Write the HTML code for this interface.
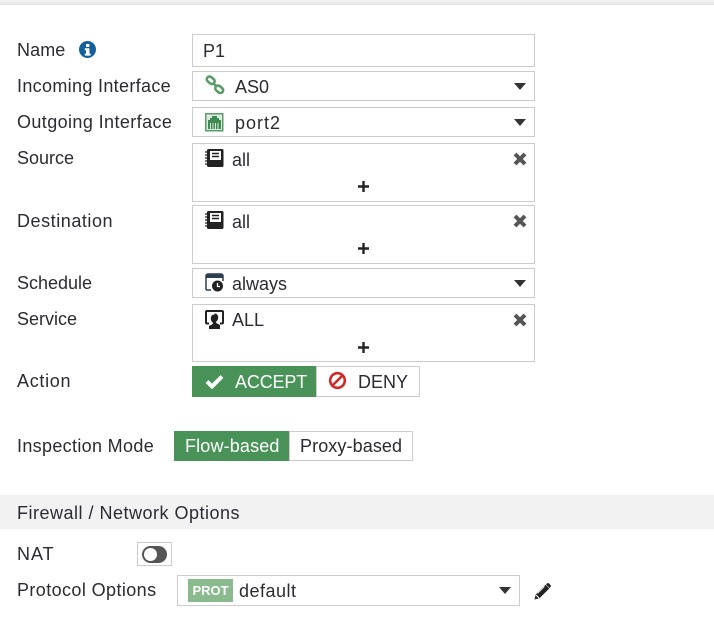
<!DOCTYPE html>
<html><head><meta charset="utf-8">
<style>
html,body{margin:0;padding:0;background:#fff;}
body{width:714px;height:631px;position:relative;overflow:hidden;font-family:"Liberation Sans",sans-serif;color:#2b2b33;font-size:18px;}
.t{position:absolute;white-space:nowrap;line-height:22px;letter-spacing:0;}
.b{position:absolute;box-sizing:border-box;border:1px solid #ccc;background:#fff;left:192px;width:343px;}
.arr{position:absolute;width:0;height:0;border-left:6.5px solid transparent;border-right:6.5px solid transparent;border-top:7px solid #333;}
svg{position:absolute;}
</style></head><body>
<div style="position:absolute;left:0;top:0;width:714px;height:5px;background:linear-gradient(#f4f4f4,#e2e2e2);"></div>

<div class="t" style="left:17px;top:39px;letter-spacing:.1px;">Name</div>
<svg style="left:79px;top:41px" width="18" height="18" viewBox="0 0 18 18"><circle cx="8.500" cy="8.500" r="8.500" fill="#14609c"/><rect x="7" y="3" width="3.400" height="3" fill="#fff"/><path d="M5.800 7.200h4.600v5.400h1.200v2H5.800v-2H7V9.200H5.800z" fill="#fff"/></svg>
<div class="b" style="top:34px;height:33px;"></div>
<div class="t" style="left:203px;top:40px;">P1</div>

<div class="t" style="left:17px;top:75px;letter-spacing:.33px;">Incoming Interface</div>
<div class="b" style="top:71px;height:30px;"></div>
<svg style="left:205px;top:75px" width="20" height="20" viewBox="0 0 20 20" fill="none" stroke="#5a9c68" stroke-width="2.600"><rect x="1.500" y="2.500" width="8.500" height="5.500" rx="2.700" transform="rotate(40 5.700 5.200)"/><rect x="10" y="11.500" width="8.500" height="5.500" rx="2.700" transform="rotate(40 14.200 14.200)"/><path d="M8 8l4 4"/></svg>
<div class="t" style="left:235px;top:76px;">AS0</div>
<div class="arr" style="left:514px;top:83px;"></div>

<div class="t" style="left:17px;top:111px;letter-spacing:.4px;">Outgoing Interface</div>
<div class="b" style="top:107px;height:30px;"></div>
<svg style="left:205px;top:113px" width="19" height="19" viewBox="0 0 19 19"><rect x=".75" y=".75" width="17" height="17" fill="#dcebe0" stroke="#5a9c68" stroke-width="1.500"/><path d="M3 16V7h2V5h2V3h5v2h2v2h2v9z" fill="#3f8a50"/><path d="M5.500 10v6M8 10v6M10.500 10v6M13 10v6" stroke="#dcebe0" stroke-width="1"/></svg>
<div class="t" style="left:235px;top:112px;letter-spacing:1px;">port2</div>
<div class="arr" style="left:514px;top:119px;"></div>

<div class="t" style="left:17px;top:147px;">Source</div>
<div class="b" style="top:143px;height:59px;"></div>
<svg style="left:205px;top:149px" width="19" height="18" viewBox="0 0 19 18"><rect x="2" y="0" width="16.500" height="18" rx="1.500" fill="#222"/><rect x="5" y="2" width="11" height="9" fill="#fff"/><path d="M7 4.500h7M7 7.500h7" stroke="#222" stroke-width="1.500"/><path d="M0 3h3M0 6h3M0 9h3M0 12h3M0 15h3" stroke="#222" stroke-width="1.200"/></svg>
<div class="t" style="left:232px;top:149px;">all</div>
<svg style="left:513px;top:152px" width="14" height="14" viewBox="0 0 14 14"><path d="M2 2l10 10M12 2L2 12" stroke="#555" stroke-width="4"/></svg>
<svg style="left:358px;top:181px" width="11" height="11" viewBox="0 0 11 11"><path d="M5.500 0v11M0 5.500h11" stroke="#222" stroke-width="2.400"/></svg>

<div class="t" style="left:17px;top:210px;letter-spacing:.55px;">Destination</div>
<div class="b" style="top:205px;height:59px;"></div>
<svg style="left:205px;top:211px" width="19" height="18" viewBox="0 0 19 18"><rect x="2" y="0" width="16.500" height="18" rx="1.500" fill="#222"/><rect x="5" y="2" width="11" height="9" fill="#fff"/><path d="M7 4.500h7M7 7.500h7" stroke="#222" stroke-width="1.500"/><path d="M0 3h3M0 6h3M0 9h3M0 12h3M0 15h3" stroke="#222" stroke-width="1.200"/></svg>
<div class="t" style="left:232px;top:211px;">all</div>
<svg style="left:513px;top:214px" width="14" height="14" viewBox="0 0 14 14"><path d="M2 2l10 10M12 2L2 12" stroke="#555" stroke-width="4"/></svg>
<svg style="left:358px;top:243px" width="11" height="11" viewBox="0 0 11 11"><path d="M5.500 0v11M0 5.500h11" stroke="#222" stroke-width="2.400"/></svg>

<div class="t" style="left:17px;top:272px;">Schedule</div>
<div class="b" style="top:268px;height:30px;"></div>
<svg style="left:205px;top:273px" width="19" height="19" viewBox="0 0 19 19"><path d="M1 17V3a2 2 0 0 1 2-2h13a2 2 0 0 1 2 2v5" fill="none" stroke="#2c3e50" stroke-width="1.500"/><rect x="1" y="1" width="17" height="4" fill="#2c3e50"/><path d="M1 17h5" stroke="#2c3e50" stroke-width="1.500"/><circle cx="12.500" cy="13" r="5.500" fill="#222"/><path d="M12.500 10v3.500h2.500" fill="none" stroke="#fff" stroke-width="1.300"/></svg>
<div class="t" style="left:232px;top:273px;">always</div>
<div class="arr" style="left:514px;top:280px;"></div>

<div class="t" style="left:17px;top:308px;">Service</div>
<div class="b" style="top:304px;height:58px;"></div>
<svg style="left:205px;top:310px" width="19" height="19" viewBox="0 0 19 19"><path d="M4 13.500H2a1 1 0 0 1-1-1V2a1 1 0 0 1 1-1h15a1 1 0 0 1 1 1v10.500a1 1 0 0 1-1 1h-2" fill="none" stroke="#222" stroke-width="2"/><path d="M9.500 3.500c2.400 0 3.700 1.700 3.700 4 0 1.700-.8 3.300-2 4v1.500l3.800 2V19H4v-3l3.800-2v-1.500c-1.200-.7-2-2.300-2-4 0-2.300 1.300-4 3.700-4z" fill="#222"/></svg>
<div class="t" style="left:232px;top:309px;">ALL</div>
<svg style="left:513px;top:313px" width="14" height="14" viewBox="0 0 14 14"><path d="M2 2l10 10M12 2L2 12" stroke="#555" stroke-width="4"/></svg>
<svg style="left:358px;top:342px" width="11" height="11" viewBox="0 0 11 11"><path d="M5.500 0v11M0 5.500h11" stroke="#222" stroke-width="2.400"/></svg>

<div class="t" style="left:17px;top:370px;letter-spacing:.7px;">Action</div>
<div style="position:absolute;left:192px;top:366px;width:124px;height:31px;background:#4a9358;"></div>
<svg style="left:205px;top:374px" width="19" height="15" viewBox="0 0 19 15"><path d="M2 7.500l5 5L17 2.500" fill="none" stroke="#fff" stroke-width="4"/></svg>
<div class="t" style="left:235px;top:371px;color:#fff;letter-spacing:-.15px;">ACCEPT</div>
<div class="b" style="left:316px;top:366px;width:104px;height:31px;"></div>
<svg style="left:328px;top:371px" width="19" height="19" viewBox="0 0 19 19"><circle cx="9.500" cy="9.500" r="7.300" fill="none" stroke="#cf2a27" stroke-width="2.600"/><path d="M4.500 14.500l10-10" stroke="#cf2a27" stroke-width="2.600"/></svg>
<div class="t" style="left:358px;top:371px;">DENY</div>

<div class="t" style="left:17px;top:435px;letter-spacing:.33px;">Inspection Mode</div>
<div style="position:absolute;left:174px;top:431px;width:115px;height:30px;background:#4a9358;"></div>
<div class="t" style="left:185px;top:435px;color:#fff;letter-spacing:.15px;">Flow-based</div>
<div class="b" style="left:289px;top:431px;width:124px;height:30px;"></div>
<div class="t" style="left:300px;top:435px;letter-spacing:.1px;">Proxy-based</div>

<div style="position:absolute;left:0;top:495px;width:714px;height:34px;background:#f2f2f2;"></div>
<div class="t" style="left:17px;top:502px;letter-spacing:.5px;">Firewall / Network Options</div>

<div class="t" style="left:17px;top:543px;letter-spacing:1px;">NAT</div>
<div style="position:absolute;box-sizing:border-box;left:137px;top:542px;width:35px;height:24px;border:1px solid #ccc;"></div>
<div style="position:absolute;box-sizing:border-box;left:142px;top:546px;width:25px;height:17px;border-radius:9px;background:#555;"></div>
<div style="position:absolute;left:144px;top:548px;width:13px;height:13px;border-radius:50%;background:#fff;"></div>

<div class="t" style="left:17px;top:579px;letter-spacing:.4px;">Protocol Options</div>
<div class="b" style="left:177px;top:575px;width:343px;height:31px;"></div>
<div style="position:absolute;left:188px;top:579px;width:45px;height:23px;background:#8abb8e;color:#fff;font-size:13px;font-weight:bold;line-height:23px;text-align:center;">PROT</div>
<div class="t" style="left:239px;top:580px;letter-spacing:.5px;">default</div>
<div class="arr" style="left:499px;top:587px;"></div>
<svg style="left:533px;top:582px" width="19" height="19" viewBox="0 0 19 19"><path d="M1.500 17.500l1.200-5L12.500 2.700l3.800 3.800-9.800 9.800z" fill="#222"/><path d="M14 1.500a1.500 1.500 0 0 1 2 0l1.500 1.500a1.500 1.500 0 0 1 0 2l-1 1L13 2.500z" fill="#222"/><path d="M3 13l3 3" stroke="#fff" stroke-width="1.100"/><path d="M4.500 11.500l7-7" stroke="#fff" stroke-width=".8"/></svg>
</body></html>
